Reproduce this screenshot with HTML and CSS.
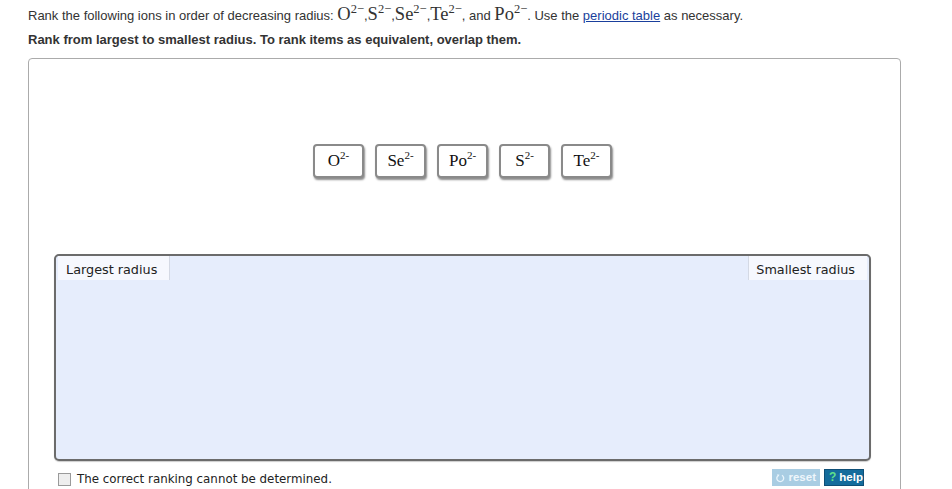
FILE: index.html
```html
<!DOCTYPE html>
<html>
<head>
<meta charset="utf-8">
<link rel="stylesheet" href="styles.css">
</head>
<body>
<div class="page">
  <p class="q">Rank the following ions in order of decreasing radius: <span class="m">O<sup>2−</sup></span>,<span class="m">S<sup>2−</sup></span>,<span class="m">Se<sup>2−</sup></span>,<span class="m">Te<sup>2−</sup></span>, and <span class="m">Po<sup>2−</sup></span>. Use the <a href="#">periodic table</a> as necessary.</p>
  <p class="inst">Rank from largest to smallest radius. To rank items as equivalent, overlap them.</p>
  <div class="box">
    <div class="tiles">
      <div class="tile"><span>O<sup>2-</sup></span></div>
      <div class="tile"><span>Se<sup>2-</sup></span></div>
      <div class="tile"><span>Po<sup>2-</sup></span></div>
      <div class="tile"><span>S<sup>2-</sup></span></div>
      <div class="tile"><span>Te<sup>2-</sup></span></div>
    </div>
    <div class="rank">
      <div class="labels">
        <span class="lab lab-l">Largest radius</span>
        <span class="lab lab-r">Smallest radius</span>
      </div>
    </div>
    <div class="foot">
      <label class="chk"><span class="cb"></span>The correct ranking cannot be determined.</label>
      <div class="btns">
        <span class="btn reset"><svg width="10" height="10" viewBox="0 0 10 10"><path d="M3 1.8 A4 4 0 1 0 7 1.8" fill="none" stroke="#e8f4fc" stroke-width="1.6"/><path d="M1.2 0.6 L4.2 1.2 L2.6 3.6 Z" fill="#e8f4fc"/></svg>reset</span>
        <span class="btn help"><span class="qm">?</span> help</span>
      </div>
    </div>
  </div>
</div>
</body>
</html>
```
FILE: styles.css
```css
body {
  margin: 0;
  background: #fff;
  color: #333;
  font-family: "Liberation Sans", Arial, sans-serif;
}
.page {
  padding: 6px 0 0 28px;
  width: 873px;
}
.q {
  margin: 0;
  font-size: 13px;
  line-height: 20px;
  height: 21px;
}
.m {
  font-family: "Liberation Serif", "Times New Roman", serif;
  font-size: 18.5px;
  line-height: 0;
}
.m sup {
  font-size: 12.5px;
  vertical-align: 7px;
  line-height: 0;
}
.q a {
  color: #1a3f9c;
  text-decoration: underline;
}
.inst {
  margin: 0;
  font-weight: bold;
  font-size: 13px;
  line-height: 18px;
  padding-top: 4px;
  height: 27px;
}
.box {
  border: 1px solid #ababab;
  border-radius: 4px;
  height: 440px;
  padding: 85px 29px 0 25px;
  box-sizing: border-box;
}
.tiles {
  display: flex;
  justify-content: center;
  gap: 11px;
}
.tile {
  width: 47px;
  height: 30px;
  border: 2px solid #8a8a8a;
  border-radius: 4px;
  background: #fff;
  box-shadow: 1px 2px 2px rgba(0,0,0,0.45);
  font-family: "Liberation Serif", "Times New Roman", serif;
  font-size: 17px;
  display: flex;
  align-items: center;
  justify-content: center;
  color: #111;
}
.tile sup {
  font-size: 11px;
  vertical-align: 7px;
  line-height: 0;
}
.rank {
  margin-top: 76px;
  height: 207px;
  border: 2px solid #6b6b6b;
  border-radius: 5px;
  background: #e6edfc;
  box-sizing: border-box;
  box-shadow: 0 1px 1px rgba(0,0,0,0.2);
}
.labels {
  display: flex;
  justify-content: space-between;
  padding: 0 2px;
}
.lab {
  font-family: "DejaVu Sans", Verdana, sans-serif;
  font-size: 12.8px;
  color: #222;
  background: #f6f8fe;
  height: 24px;
  line-height: 24px;
  padding-top: 2px;
  box-sizing: border-box;
}
.lab-l {
  padding-left: 8px;
  padding-right: 12px;
  border-right: 1px solid #d4d9e4;
}
.lab-r {
  padding-left: 7px;
  padding-right: 12px;
  border-left: 1px solid #d4d9e4;
}
.foot {
  display: flex;
  justify-content: space-between;
  align-items: center;
  margin-top: 8px;
  padding: 0 0 0 4px;
}
.chk {
  display: flex;
  align-items: center;
  font-family: "DejaVu Sans", Verdana, sans-serif;
  font-size: 11.85px;
  color: #222;
  padding-top: 3px;
}
.cb {
  width: 11px;
  height: 11px;
  border: 1px solid #9a9a9a;
  background: #eee;
  margin-right: 6px;
  display: inline-block;
}
.btns {
  display: flex;
  gap: 4px;
  margin-right: 7px;
}
.btn {
  height: 17px;
  line-height: 17px;
  font-family: "Liberation Sans", Arial, sans-serif;
  font-weight: bold;
  font-size: 11.5px;
  color: #fff;
  display: flex;
  align-items: center;
  padding: 0 4px;
  box-sizing: border-box;
}
.reset {
  width: 48px;
  background: #a9cde3;
  color: #eef6fb;
  gap: 4px;
}
.help {
  width: 40px;
  background: #146c9c;
  border: 1px solid #0e4f77;
}
.qm {
  color: #5fe08a;
  margin-right: 3px;
  font-size: 12px;
}
```
